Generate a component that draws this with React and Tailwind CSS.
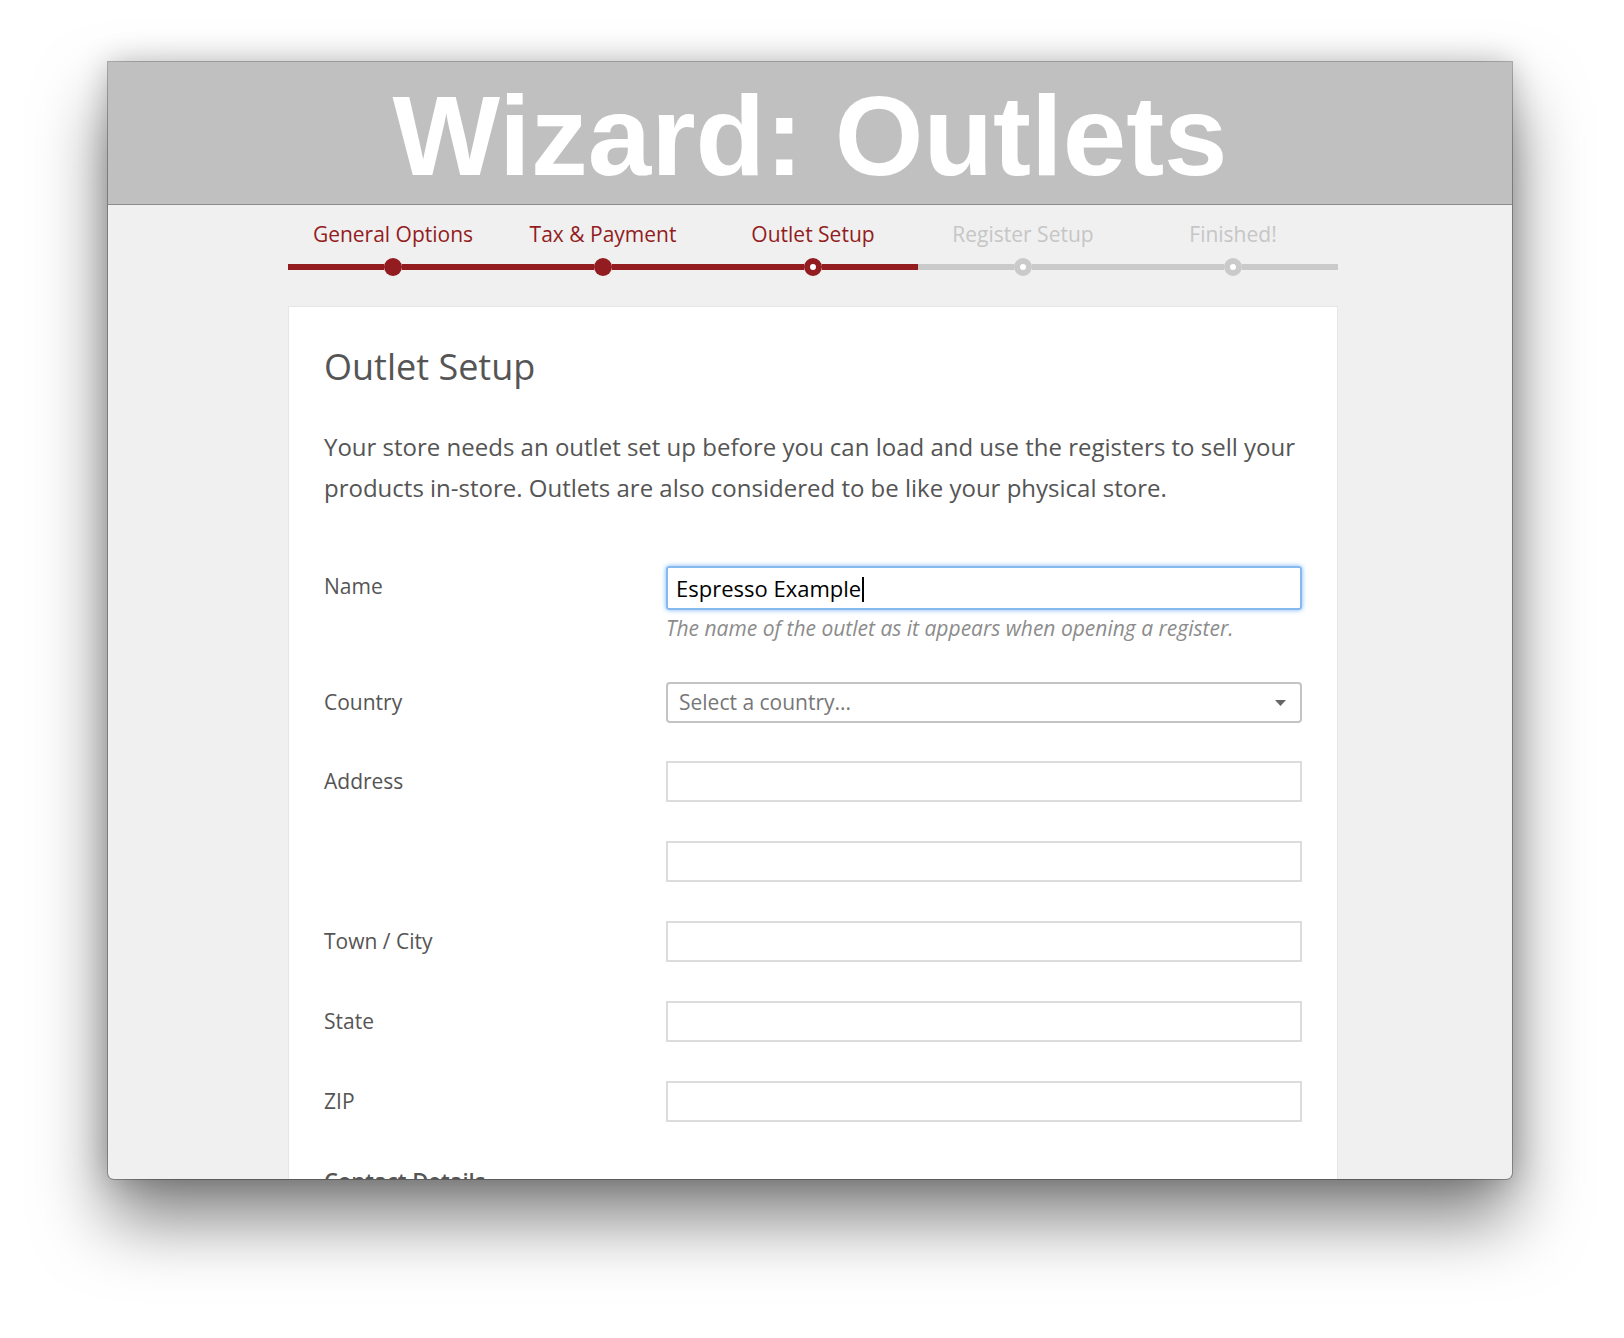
const steps = [
  { label: "General Options", state: "done" },
  { label: "Tax & Payment", state: "done" },
  { label: "Outlet Setup", state: "current" },
  { label: "Register Setup", state: "todo" },
  { label: "Finished!", state: "todo" },
];

const fields = [
  { label: "Address" },
  { label: "" },
  { label: "Town / City" },
  { label: "State" },
  { label: "ZIP" },
];

function StepDot({ state }) {
  if (state === "done") return <span className="h-[18px] w-[18px] shrink-0 rounded-full bg-[#931c21]" />;
  if (state === "current")
    return <span className="h-[18px] w-[18px] shrink-0 rounded-full border-[6px] border-[#931c21] bg-white" />;
  return <span className="h-[18px] w-[18px] shrink-0 rounded-full border-[6px] border-[#cacaca] bg-white" />;
}

function Stepper() {
  return (
    <div className="ml-[180px] grid w-[1050px] grid-cols-5 pt-[15px]">
      {steps.map((s) => {
        const active = s.state !== "todo";
        return (
          <div key={s.label} className="flex flex-col items-center">
            <span className={`text-[21px] leading-[28px] ${active ? "text-[#931c21]" : "text-[#c6c6c6]"}`}>{s.label}</span>
            <div className="mt-[10px] flex h-[18px] w-full items-center">
              <span className={`h-[6px] flex-1 ${active ? "bg-[#931c21]" : "bg-[#cacaca]"}`} />
              <StepDot state={s.state} />
              <span className={`h-[6px] flex-1 ${active ? "bg-[#931c21]" : "bg-[#cacaca]"}`} />
            </div>
          </div>
        );
      })}
    </div>
  );
}

function Row({ label, children }) {
  return (
    <div className="flex">
      <div className="flex h-[41px] w-[342px] shrink-0 items-center text-[21px] text-[#555]">{label}</div>
      <div className="flex-1">{children}</div>
    </div>
  );
}

export default function App() {
  return (
    <div
      className="min-h-[1338px] w-[1624px] bg-white pl-[108px] pt-[62px]"
      style={{ fontFamily: '"Open Sans", "Noto Sans", sans-serif' }}
    >
      <div className="flex h-[1117px] w-[1404px] flex-col overflow-hidden rounded-b-[6px] bg-[#f0f0f0] shadow-[0_40px_70px_rgba(0,0,0,0.5),0_0_30px_rgba(0,0,0,0.22),0_0_0_1px_rgba(0,0,0,0.28)]">
        <header className="h-[143px] shrink-0 border-b border-[#8c8c8c] bg-[#c0c0c0] pt-[17px] text-center">
          <h1
            className="text-[114px] font-bold leading-none text-white"
            style={{ fontFamily: '"Liberation Sans", Arial, sans-serif' }}
          >
            Wizard: Outlets
          </h1>
        </header>

        <Stepper />

        <section className="ml-[180px] mt-[30px] w-[1050px] flex-1 border border-[#e6e6e6] bg-white px-[35px] pt-[39px]">
          <h2 className="text-[36px] leading-[42px] text-[#555]">Outlet Setup</h2>
          <p className="mt-[38px] text-[24px] leading-[41px] text-[#555]">
            Your store needs an outlet set up before you can load and use the registers to sell your products in-store. Outlets are also considered to be like your physical store.
          </p>

          <div className="mt-[58px]">
            <Row label="Name">
              <div className="h-[44px] rounded-[3px] border-2 border-[#85b9ef] px-[8px] shadow-[0_0_5px_rgba(90,160,240,0.8)]">
                <span className="text-[22px] leading-[40px] text-black">Espresso Example</span>
                <span className="ml-px inline-block h-[25px] w-[2px] translate-y-[5px] bg-black" />
              </div>
              <p className="mt-[6px] text-[21px] italic leading-[24px] text-[#8c8c8c]">
                The name of the outlet as it appears when opening a register.
              </p>
            </Row>

            <div className="mt-[42px]">
              <Row label="Country">
                <div className="flex h-[41px] items-center justify-between rounded-[4px] border-2 border-[#c4c4c4] bg-white pl-[11px] pr-[14px]">
                  <span className="text-[21px] text-[#777]">Select a country...</span>
                  <svg width="11" height="6" viewBox="0 0 11 6">
                    <path d="M0 0h11L5.5 6z" fill="#666" />
                  </svg>
                </div>
              </Row>
            </div>

            <div className="mt-[38px] flex flex-col gap-[39px]">
              {fields.map((f, i) => (
                <Row key={i} label={f.label}>
                  <div className="h-[41px] border-2 border-[#dcdcdc] bg-white" />
                </Row>
              ))}
            </div>

            <h3 className="mt-[42px] text-[22px] font-semibold text-[#555]">Contact Details</h3>
          </div>
        </section>
      </div>
    </div>
  );
}
